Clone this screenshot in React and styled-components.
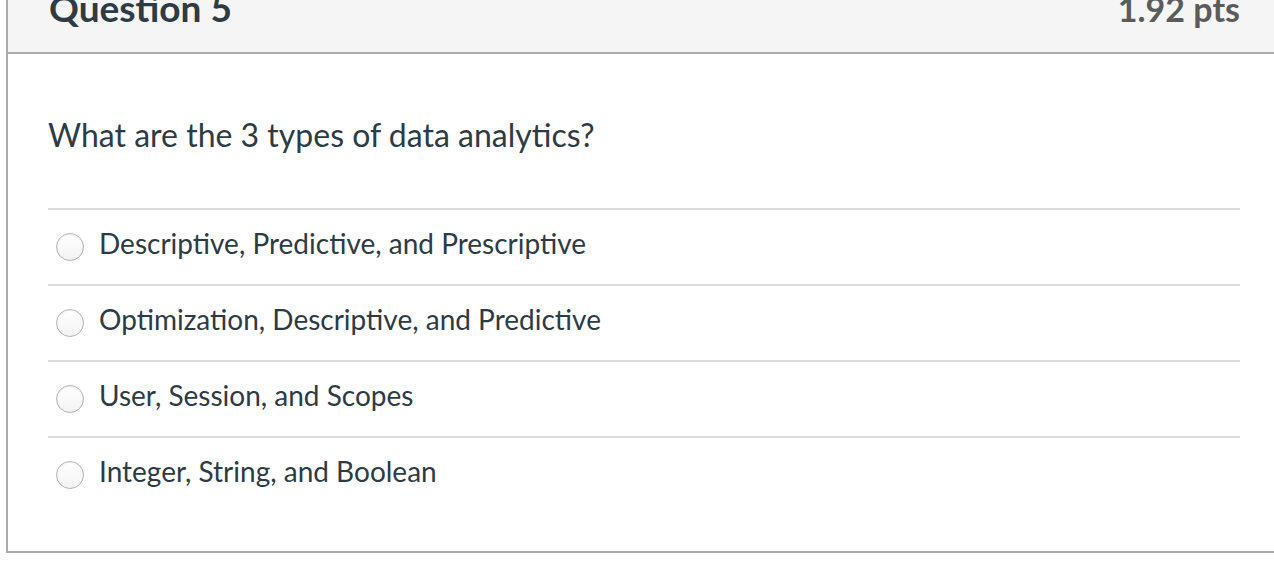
import React from 'react';
import styled, { createGlobalStyle } from 'styled-components';

const GlobalStyle = createGlobalStyle`
  html, body {
    margin: 0;
    padding: 0;
    background: #fff;
    overflow: hidden;
  }
  body {
    font-family: Lato, "Open Sans", sans-serif;
    color: #2d3b45;
  }
`;

const Page = styled.div`
  padding-left: 6px;
  margin-top: -20px;
`;

const Panel = styled.div`
  box-sizing: border-box;
  width: 1300px;
  border: 2px solid #aaaaaa;
`;

const Header = styled.div`
  box-sizing: border-box;
  height: 72px;
  display: flex;
  justify-content: space-between;
  align-items: baseline;
  background: #f5f5f5;
  border-bottom: 2px solid #aaaaaa;
  padding: 4px 64px 0 41px;
  line-height: 44px;
`;

const Title = styled.div`
  font-size: 37px;
  font-weight: 700;
  color: #2d3b45;
`;

const Points = styled.div`
  font-size: 34px;
  font-weight: 700;
  color: #5b5b5b;
`;

const Body = styled.div`
  padding: 61px 64px 39px 40px;
`;

const QuestionText = styled.div`
  font-size: 32px;
  line-height: 40px;
  margin-bottom: 53px;
`;

const AnswerList = styled.div`
  display: flex;
  flex-direction: column;
`;

const AnswerRow = styled.label`
  display: flex;
  align-items: center;
  gap: 15px;
  height: 74px;
  border-top: 2px solid #dddddd;
  padding-left: 8px;
  font-size: 28px;
  color: #2d3b45;
`;

const AnswerText = styled.span`
  line-height: 34px;
  padding-bottom: 8px;
`;

const Radio = styled.span`
  box-sizing: border-box;
  width: 28px;
  height: 28px;
  border-radius: 50%;
  border: 1.5px solid #b4b4b4;
  background: linear-gradient(180deg, #ffffff 0%, #f3f3f3 100%);
  box-shadow: inset 0 1px 2px rgba(0, 0, 0, 0.06);
  flex-shrink: 0;
`;

const answers = [
  'Descriptive, Predictive, and Prescriptive',
  'Optimization, Descriptive, and Predictive',
  'User, Session, and Scopes',
  'Integer, String, and Boolean',
];

export default function App() {
  return (
    <>
      <GlobalStyle />
      <Page>
        <Panel>
          <Header>
            <Title>Question 5</Title>
            <Points>1.92 pts</Points>
          </Header>
          <Body>
            <QuestionText>What are the 3 types of data analytics?</QuestionText>
            <AnswerList>
              {answers.map((a) => (
                <AnswerRow key={a}>
                  <Radio />
                  <AnswerText>{a}</AnswerText>
                </AnswerRow>
              ))}
            </AnswerList>
          </Body>
        </Panel>
      </Page>
    </>
  );
}
